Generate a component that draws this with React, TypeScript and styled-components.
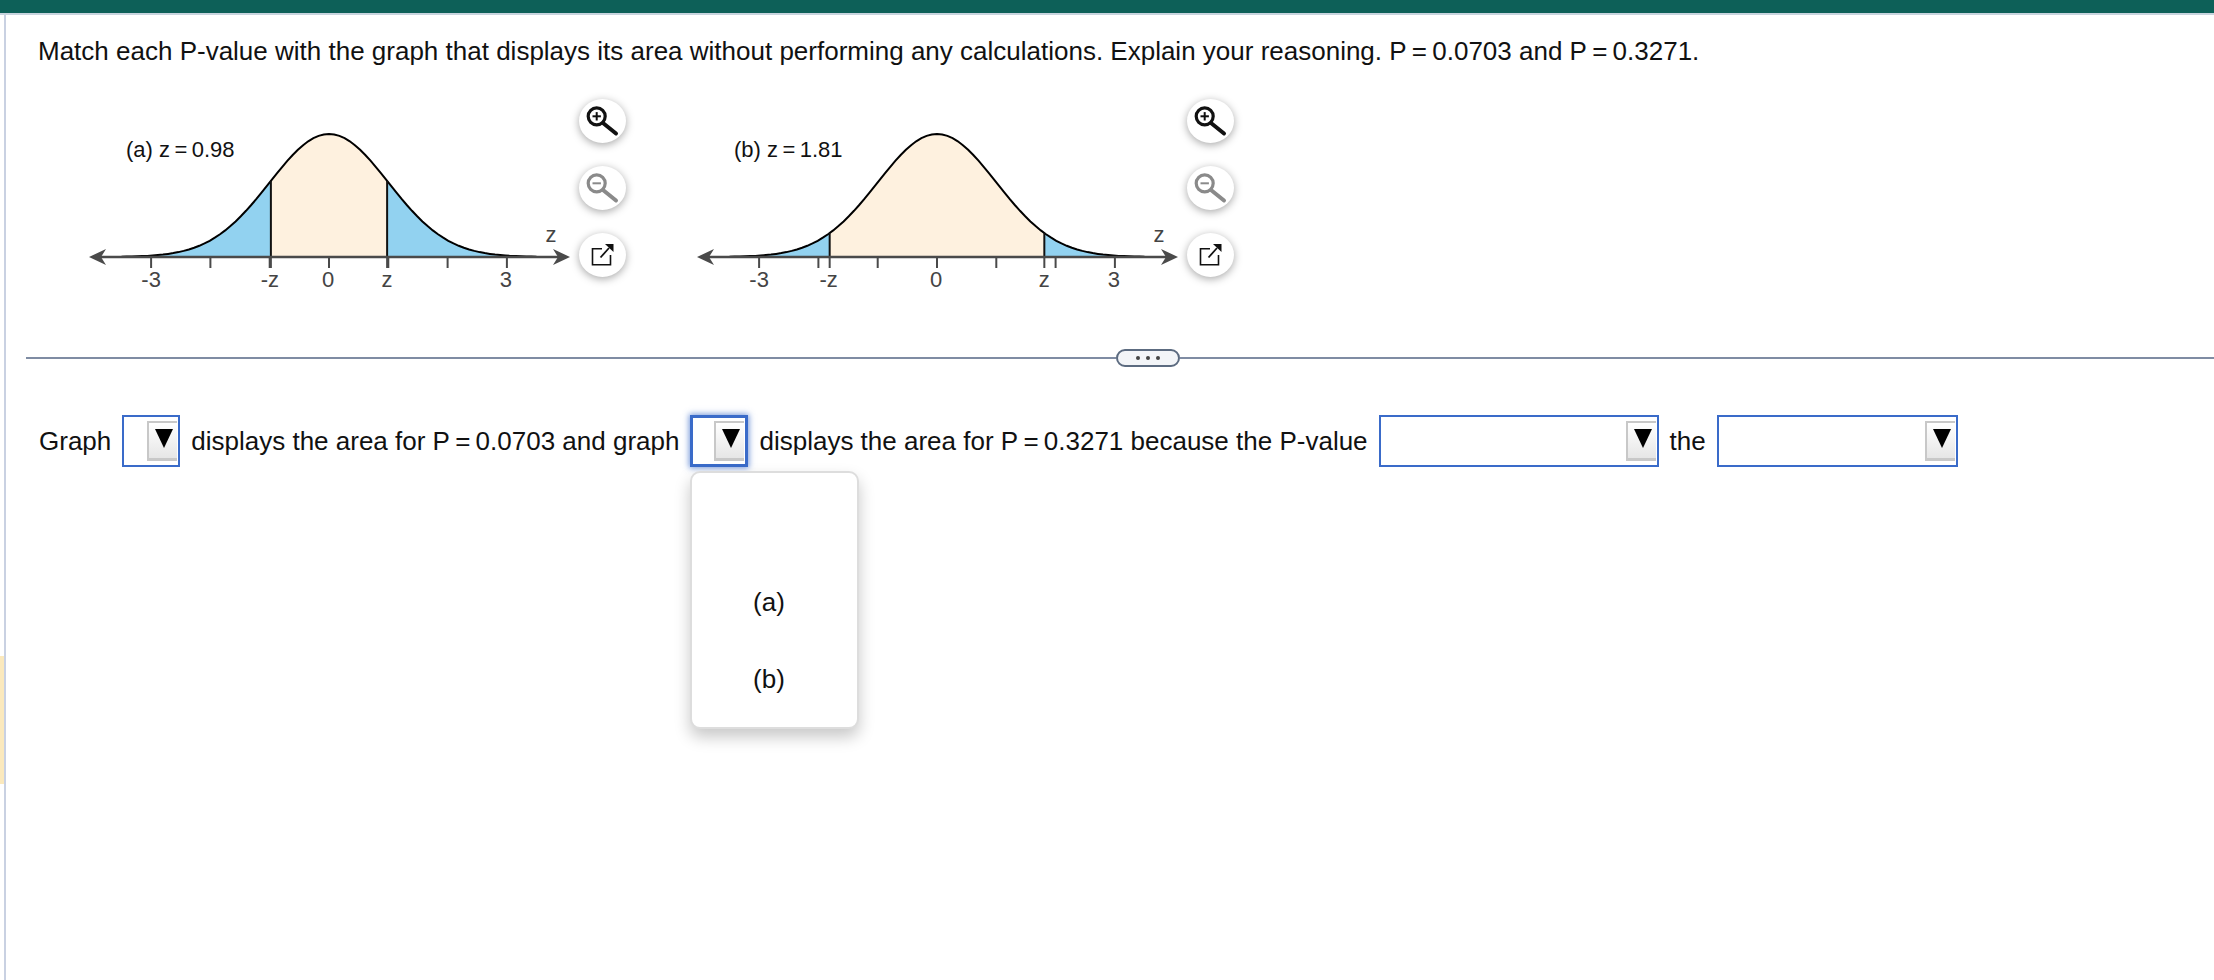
import React from "react";
import styled, { createGlobalStyle } from "styled-components";

const GlobalStyle = createGlobalStyle`
  html, body { margin: 0; padding: 0; background: #fff; }
  body { font-family: "Liberation Sans", Arial, sans-serif; color: #111; }
`;

const Page = styled.div`
  position: relative;
  width: 2214px;
  height: 980px;
  overflow: hidden;
  background: #fff;
`;

const TopBar = styled.div`
  height: 13px;
  background: #0d6058;
  border-bottom: 2px solid #c8d4de;
`;

const SideMark = styled.div`
  position: absolute;
  left: 0;
  top: 656px;
  width: 4px;
  height: 128px;
  background: #fbe9bd;
`;

const Main = styled.main`
  margin-left: 4px;
  height: 965px;
  border-left: 2px solid #c9d1e2;
`;

const Question = styled.p`
  margin: 0;
  padding: 22px 0 0 32px;
  font-size: 26px;
  line-height: 28px;
  white-space: nowrap;
`;

const FigureRow = styled.div`
  display: flex;
  gap: 63px;
  margin-top: 34px;
  padding-left: 75px;
  height: 210px;
`;

const Figure = styled.figure`
  display: flex;
  margin: 0;
`;

const GraphSvg = styled.svg`
  display: block;
  width: 498px;
  height: 200px;
`;

const Tools = styled.div`
  display: flex;
  flex-direction: column;
  gap: 23px;
`;

const ToolButton = styled.button`
  display: block;
  width: 47px;
  height: 44px;
  padding: 0;
  border: 0;
  border-radius: 50%;
  background: #fff;
  box-shadow: 0 2px 8px rgba(0, 0, 0, 0.35);
  color: ${(p) => (p.disabled ? "#8a8a8a" : "#111")};
`;

const ToolIcon = styled.svg`
  display: block;
  width: 47px;
  height: 44px;
`;

const Divider = styled.div`
  display: flex;
  align-items: center;
  height: 18px;
  margin: 40px 0 0 20px;
`;

const DividerLine = styled.div<{ $width?: number }>`
  height: 2px;
  background: #7f8ca3;
  flex: ${(p) => (p.$width ? `0 0 ${p.$width}px` : "1")};
`;

const Pill = styled.div`
  display: flex;
  align-items: center;
  justify-content: center;
  gap: 6px;
  box-sizing: border-box;
  width: 64px;
  height: 18px;
  border: 2px solid #5c6b80;
  border-radius: 9px;
  background: #f3f5f8;
`;

const Dot = styled.span`
  width: 4px;
  height: 4px;
  border-radius: 50%;
  background: #444;
`;

const AnswerRow = styled.div`
  display: flex;
  align-items: center;
  gap: 11px;
  height: 52px;
  margin-top: 48px;
  padding-left: 33px;
  font-size: 26px;
  white-space: nowrap;
`;

const Field = styled.div<{ $width: number; $open?: boolean }>`
  position: relative;
  display: flex;
  align-items: center;
  justify-content: flex-end;
  box-sizing: border-box;
  width: ${(p) => p.$width}px;
  height: 52px;
  padding-right: 1px;
  border: ${(p) => (p.$open ? 3 : 2)}px solid #3a6bc9;
  background: #fff;
  box-shadow: ${(p) => (p.$open ? "0 0 6px 1px rgba(58, 107, 201, 0.7)" : "none")};
`;

const FieldButton = styled.div`
  display: flex;
  align-items: center;
  justify-content: center;
  box-sizing: border-box;
  width: 30px;
  height: 40px;
  border: 2px solid #c8c8c8;
  border-right: 0;
  border-bottom-width: 3px;
  background: linear-gradient(#ffffff, #e6e6e6);
`;

const Triangle = styled.span`
  width: 0;
  height: 0;
  margin: 0 0 5px 2px;
  border-left: 9px solid transparent;
  border-right: 9px solid transparent;
  border-top: 19px solid #000;
`;

const Menu = styled.ul`
  position: absolute;
  top: 53px;
  left: -3px;
  box-sizing: border-box;
  width: 169px;
  height: 258px;
  margin: 0;
  padding: 14px 12px 0 0;
  list-style: none;
  background: #fff;
  border: 2px solid #ddd;
  border-radius: 10px;
  box-shadow: 0 8px 16px rgba(0, 0, 0, 0.22);
`;

const MenuItem = styled.li`
  display: flex;
  align-items: center;
  justify-content: center;
  height: 77px;
  font-size: 26px;
`;

const curvePoint = (x: number, unit: number, cx: number, axis: number, peak: number) =>
  `${(cx + x * unit).toFixed(1)},${(axis - (axis - peak) * Math.exp((-x * x) / 2)).toFixed(1)}`;

const curveBetween = (from: number, to: number, unit: number, cx: number, axis: number, peak: number) => {
  const pts: string[] = [];
  for (let i = 0; i <= 80; i++) {
    pts.push(curvePoint(from + ((to - from) * i) / 80, unit, cx, axis, peak));
  }
  return pts;
};

type GraphProps = { label: string; z: number };

function NormalGraph({ label, z }: GraphProps) {
  // the mean is at x=248 of the svg
  const cx = 248;
  const unit = 59.3;
  const axis = 158;
  const peak = 35;
  const xz = z * unit;
  const tail = 3.5;
  const line = curveBetween(-tail, tail, unit, cx, axis, peak).join(" ");
  const middle = curveBetween(-z, z, unit, cx, axis, peak).join(" ");
  const left = curveBetween(-tail, -z, unit, cx, axis, peak).join(" ");
  const right = curveBetween(z, tail, unit, cx, axis, peak).join(" ");
  const ticks = [-3, -2, -1, 0, 1, 2, 3];
  const labels: [string, number][] = [
    ["-3", cx - 3 * unit],
    ["-z", cx - xz - 1],
    ["0", cx - 1],
    ["z", cx + xz],
    ["3", cx + 3 * unit - 1],
  ];
  return (
    <GraphSvg viewBox="0 0 498 200">
      <polygon points={`${left} ${cx - xz},${axis}`} fill="#92d2f0" />
      <polygon points={`${right} ${cx + tail * unit},${axis} ${cx + xz},${axis}`} fill="#92d2f0" />
      <polygon points={`${cx - xz},${axis} ${middle} ${cx + xz},${axis}`} fill="#fef1df" />
      <polyline points={line} fill="none" stroke="#000" strokeWidth="2" />
      <line x1={cx - xz} y1={axis} x2={cx - xz} y2={axis - (axis - peak) * Math.exp((-z * z) / 2)} stroke="#111" strokeWidth="2" />
      <line x1={cx + xz} y1={axis} x2={cx + xz} y2={axis - (axis - peak) * Math.exp((-z * z) / 2)} stroke="#111" strokeWidth="2" />
      <line x1={14} y1={axis} x2={484} y2={axis} stroke="#4a4a4a" strokeWidth="2.5" />
      <path d="M8 158 L25 150 L20 158 L25 166 Z" fill="#4a4a4a" />
      <path d="M489 158 L472 150 L477 158 L472 166 Z" fill="#4a4a4a" />
      {ticks.map((t) => (
        <line key={t} x1={cx + t * unit} y1={axis} x2={cx + t * unit} y2={axis + 11} stroke="#4a4a4a" strokeWidth="2" />
      ))}
      <line x1={cx - xz} y1={axis} x2={cx - xz} y2={axis + 11} stroke="#4a4a4a" strokeWidth="2" />
      <line x1={cx + xz} y1={axis} x2={cx + xz} y2={axis + 11} stroke="#4a4a4a" strokeWidth="2" />
      {labels.map(([text, x]) => (
        <text key={text} x={x} y={axis + 30} textAnchor="middle" fontSize="22" fontFamily="Liberation Sans" fill="#444">
          {text}
        </text>
      ))}
      <text x={470} y={143} textAnchor="middle" fontSize="22" fontFamily="Liberation Sans" fill="#444">
        z
      </text>
      <text x={45} y={58} fontSize="22" fontFamily="Liberation Sans" fill="#111">
        {label}
      </text>
    </GraphSvg>
  );
}

function ZoomIcon({ plus }: { plus?: boolean }) {
  return (
    <ToolIcon viewBox="0 0 47 44" fill="none" stroke="currentColor">
      <circle cx="17.7" cy="17.3" r="8.5" strokeWidth="3.2" />
      <line x1="24" y1="24" x2="37" y2="34.5" strokeWidth="4" strokeLinecap="round" />
      <line x1="13.5" y1="17.3" x2="21.9" y2="17.3" strokeWidth="2" />
      {plus && <line x1="17.7" y1="13.1" x2="17.7" y2="21.5" strokeWidth="2" />}
    </ToolIcon>
  );
}

function OpenIcon() {
  return (
    <ToolIcon viewBox="0 0 47 44" fill="none" stroke="currentColor">
      <path d="M23 15.8 H13.5 V31.8 H31.5 V22" strokeWidth="1.6" />
      <line x1="21.5" y1="24.5" x2="30" y2="15" strokeWidth="1.8" />
      <path d="M26 11 H34.5 V19 Z" fill="currentColor" stroke="none" />
    </ToolIcon>
  );
}

function GraphTools() {
  return (
    <Tools>
      <ToolButton aria-label="Zoom in">
        <ZoomIcon plus />
      </ToolButton>
      <ToolButton aria-label="Zoom out" disabled>
        <ZoomIcon />
      </ToolButton>
      <ToolButton aria-label="Open in new window">
        <OpenIcon />
      </ToolButton>
    </Tools>
  );
}

function Dropdown({ width, open }: { width: number; open?: boolean }) {
  return (
    <Field $width={width} $open={open}>
      <FieldButton>
        <Triangle />
      </FieldButton>
      {open && (
        <Menu>
          <MenuItem />
          <MenuItem>(a)</MenuItem>
          <MenuItem>(b)</MenuItem>
        </Menu>
      )}
    </Field>
  );
}

export default function App() {
  return (
    <Page>
      <GlobalStyle />
      <TopBar />
      <SideMark />
      <Main>
        <Question>
          Match each P-value with the graph that displays its area without performing any calculations. Explain your
          reasoning. P{"\u2009"}={"\u2009"}0.0703 and P{"\u2009"}={"\u2009"}0.3271.
        </Question>
        <FigureRow>
          <Figure>
            <NormalGraph label={"(a) z\u2009=\u20090.98"} z={0.98} />
            <GraphTools />
          </Figure>
          <Figure>
            <NormalGraph label={"(b) z\u2009=\u20091.81"} z={1.81} />
            <GraphTools />
          </Figure>
        </FigureRow>
        <Divider>
          <DividerLine $width={1090} />
          <Pill>
            <Dot />
            <Dot />
            <Dot />
          </Pill>
          <DividerLine />
        </Divider>
        <AnswerRow>
          <span>Graph</span>
          <Dropdown width={58} />
          <span>displays the area for P{"\u2009"}={"\u2009"}0.0703 and graph</span>
          <Dropdown width={58} open />
          <span>displays the area for P{"\u2009"}={"\u2009"}0.3271 because the P-value</span>
          <Dropdown width={280} />
          <span>the</span>
          <Dropdown width={241} />
        </AnswerRow>
      </Main>
    </Page>
  );
}
